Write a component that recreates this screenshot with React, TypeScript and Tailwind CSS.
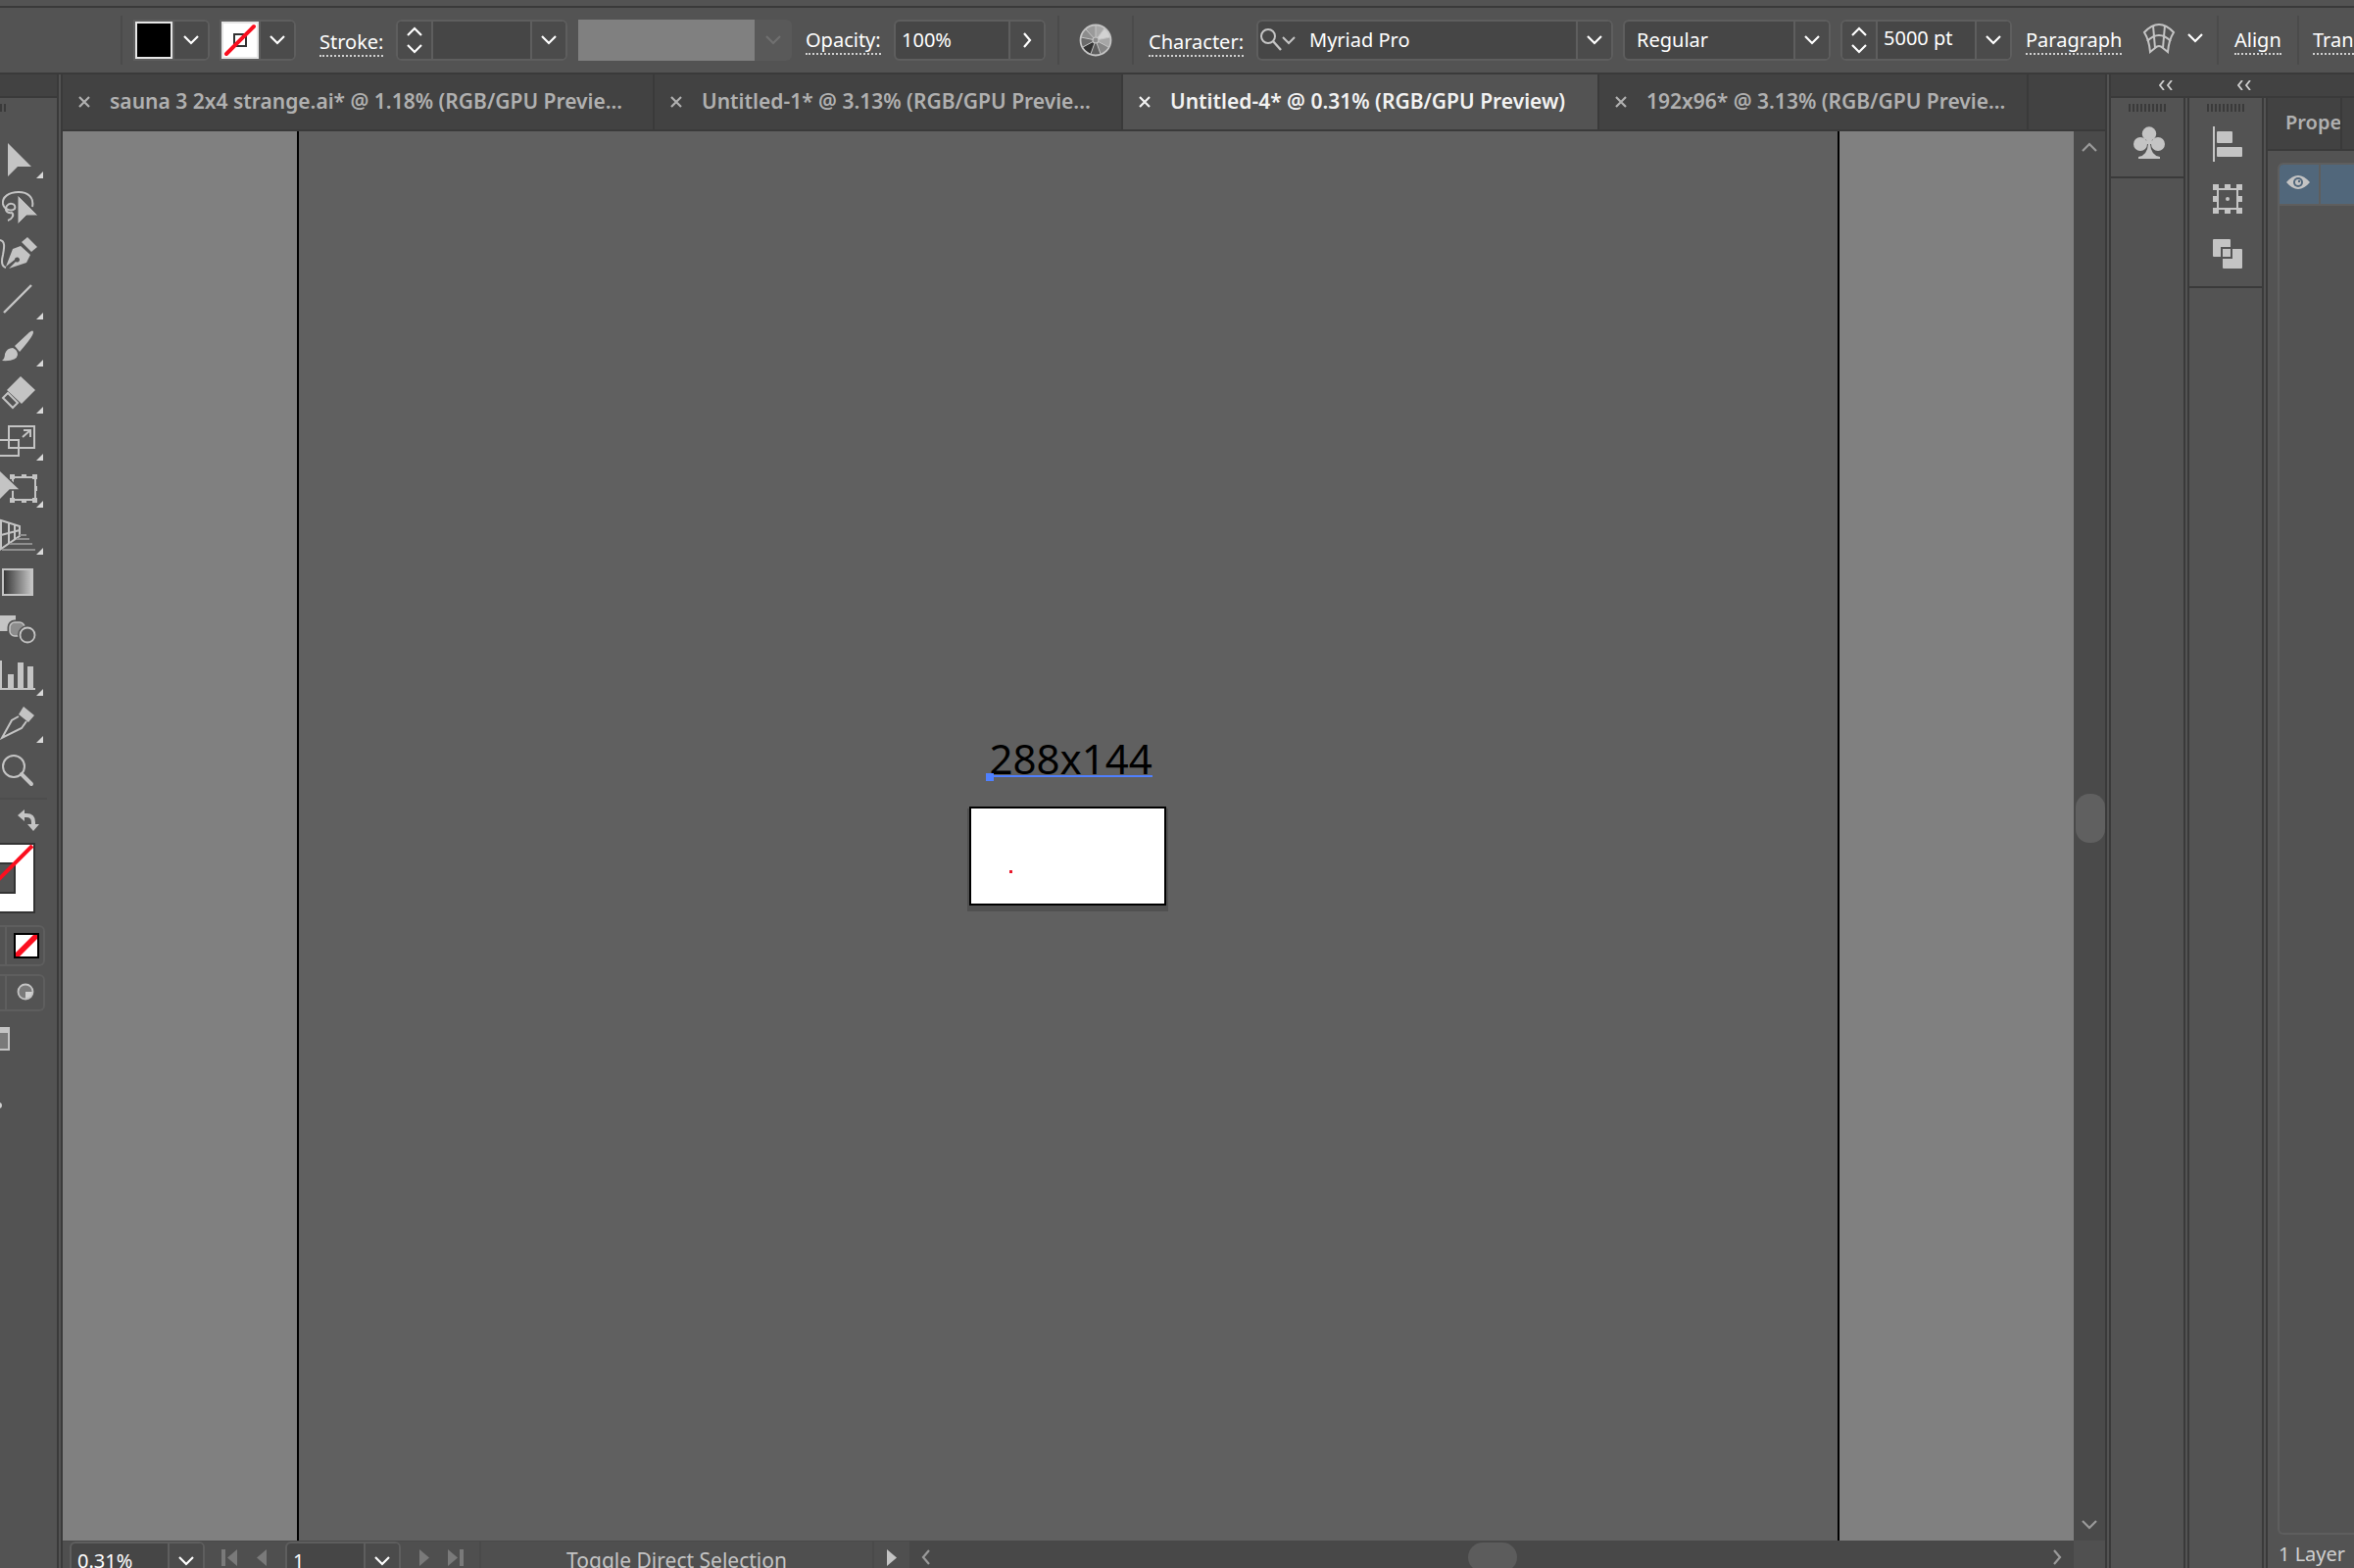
import React, { useState } from 'react';

type Dir = 'up' | 'down' | 'left' | 'right';

const chevronPaths: Record<Dir, string> = {
  down: 'M1 4 L8 11 L15 4',
  up: 'M1 12 L8 5 L15 12',
  left: 'M11 1 L5 8 L11 15',
  right: 'M5 1 L11 8 L5 15',
};

const Chevron = ({ dir = 'down', className = 'text-white' }: { dir?: Dir; className?: string }) => (
  <svg width="16" height="16" viewBox="0 0 16 16" fill="none" className={className}>
    <path d={chevronPaths[dir]} stroke="currentColor" strokeWidth="2.2" />
  </svg>
);

const Separator = () => <div className="w-[2px] h-[50px] bg-[#4b4b4b] shrink-0" />;

const boxClass =
  'flex h-[42px] shrink-0 overflow-hidden rounded-md border-2 border-[#5e5e5e] bg-[#464646]';
const arrowClass = 'flex items-center justify-center bg-[#4b4b4b] border-l-2 border-[#5e5e5e] shrink-0';
const inputClass = 'min-w-0 flex-1 bg-transparent text-white outline-none';
const underlineClass = 'border-b-2 border-dotted border-[#d0d0d0] leading-6';

const Stepper = () => (
  <div className="flex w-[34px] shrink-0 flex-col items-center justify-between bg-[#4b4b4b] py-[2px]">
    <button type="button" aria-label="Increase" className="h-4">
      <Chevron dir="up" />
    </button>
    <button type="button" aria-label="Decrease" className="h-4">
      <Chevron dir="down" />
    </button>
  </div>
);

const ControlBar = () => {
  const [strokeWeight, setStrokeWeight] = useState('');
  const [opacity, setOpacity] = useState('100%');
  const [font, setFont] = useState('Myriad Pro');
  const [style, setStyle] = useState('Regular');
  const [size, setSize] = useState('5000 pt');

  return (
    <header className="flex h-[70px] shrink-0 items-center overflow-hidden whitespace-nowrap border-y-2 border-[#3a3a3a] bg-[#535353] text-white">
      <div className="w-[123px] shrink-0" />
      <Separator />

      {/* Fill and stroke swatches */}
      <button type="button" aria-label="Fill" className={`${boxClass} ml-[11px] w-[78px] rounded-l-none`}>
        <span className="h-full w-[38px] shrink-0 border-2 border-[#e6e6e6] bg-black" />
        <span className={`${arrowClass} h-full flex-1`}>
          <Chevron />
        </span>
      </button>
      <button type="button" aria-label="Stroke colour" className={`${boxClass} ml-[10px] w-[78px] rounded-l-none`}>
        <svg width="38" height="38" viewBox="0 0 38 38" className="shrink-0">
          <rect width="38" height="38" fill="#e6e6e6" />
          <rect x="2" y="2" width="34" height="34" fill="#fff" />
          <rect x="13" y="13" width="12" height="12" fill="none" stroke="#333" strokeWidth="2" />
          <path d="M5 33 L33 5" stroke="#fb0f1f" strokeWidth="4" strokeLinecap="round" />
        </svg>
        <span className={`${arrowClass} h-full flex-1`}>
          <Chevron />
        </span>
      </button>

      <label htmlFor="stroke-weight" className="ml-6 w-[78px] shrink-0 pt-1">
        <span className={underlineClass}>Stroke:</span>
      </label>
      <div className={`${boxClass} w-[175px]`}>
        <Stepper />
        <input
          id="stroke-weight"
          type="text"
          value={strokeWeight}
          onChange={(e) => setStrokeWeight(e.target.value)}
          className={`${inputClass} border-l-2 border-[#5e5e5e]`}
        />
        <button type="button" aria-label="Stroke presets" className={`${arrowClass} w-[36px]`}>
          <Chevron />
        </button>
      </div>

      <button type="button" aria-label="Variable width profile" disabled className="ml-[11px] flex h-[42px] w-[218px] shrink-0">
        <span className="h-full w-[180px] bg-[#808080]" />
        <span className="flex h-full flex-1 items-center justify-center rounded-r-md bg-[#595959]">
          <Chevron className="text-[#707070]" />
        </span>
      </button>

      <label htmlFor="opacity" className="ml-[14px] w-[90px] shrink-0">
        <span className={underlineClass}>Opacity:</span>
      </label>
      <div className={`${boxClass} w-[155px]`}>
        <input
          id="opacity"
          type="text"
          value={opacity}
          onChange={(e) => setOpacity(e.target.value)}
          className={`${inputClass} pl-[6px]`}
        />
        <button type="button" aria-label="Opacity slider" className={`${arrowClass} w-[36px]`}>
          <Chevron dir="right" />
        </button>
      </div>

      <div className="w-3 shrink-0" />
      <Separator />
      <button type="button" aria-label="Recolor artwork" className="mx-[20px] shrink-0">
        <svg width="34" height="34" viewBox="0 0 34 34">
          <circle cx="17" cy="17" r="15.5" fill="#8c8c8c" />
          <path d="M17 17 L7 6 A15 15 0 0 1 17 2 Z" fill="#9a9a9a" />
          <path d="M17 17 L17 2 A15 15 0 0 1 26 5 Z" fill="#a8a8a8" />
          <path d="M17 17 L26 5 A15 15 0 0 1 32 14 Z" fill="#d2d2d2" />
          <path d="M17 17 L32 14 A15 15 0 0 1 30 24 Z" fill="#a6a6a6" />
          <path d="M17 17 L30 24 A15 15 0 0 1 22 31 Z" fill="#858585" />
          <path d="M17 17 L22 31 A15 15 0 0 1 12 31 Z" fill="#5e5e5e" />
          <path d="M17 17 L12 31 A15 15 0 0 1 4 24 Z" fill="#333" />
          <path d="M17 17 L4 24 A15 15 0 0 1 2 14 Z" fill="#6a6a6a" />
          <path
            d="M17 17 L7 6 M17 17 V2 M17 17 L26 5 M17 17 L32 14 M17 17 L30 24 M17 17 L22 31 M17 17 L12 31 M17 17 L4 24 M17 17 L2 14"
            stroke="#c4c4c4"
            strokeWidth="1"
          />
          <circle cx="17" cy="17" r="15.5" fill="none" stroke="#c4c4c4" strokeWidth="1.8" />
          <circle cx="17" cy="17" r="3" fill="#8c8c8c" stroke="#c4c4c4" strokeWidth="1.2" />
        </svg>
      </button>
      <Separator />

      <label htmlFor="font" className="ml-[15px] w-[110px] shrink-0 pt-1">
        <span className={underlineClass}>Character:</span>
      </label>
      <div className={`${boxClass} w-[364px]`}>
        <svg width="40" height="38" viewBox="0 0 40 38" fill="none" stroke="#c4c4c4" className="shrink-0">
          <circle cx="10" cy="15" r="7" strokeWidth="2" />
          <path d="M15 20 L23 29" strokeWidth="2.4" />
          <path d="M25 16 L31 22 L37 16" strokeWidth="2" />
        </svg>
        <input
          id="font"
          type="text"
          value={font}
          onChange={(e) => setFont(e.target.value)}
          className={`${inputClass} pl-[12px]`}
        />
        <button type="button" aria-label="Font list" className={`${arrowClass} w-[36px]`}>
          <Chevron />
        </button>
      </div>

      <div className={`${boxClass} ml-[10px] w-[212px]`}>
        <select
          aria-label="Font style"
          value={style}
          onChange={(e) => setStyle(e.target.value)}
          className="min-w-0 flex-1 appearance-none bg-transparent pl-3 text-white outline-none"
        >
          <option>Regular</option>
          <option>Bold</option>
          <option>Italic</option>
        </select>
        <span className={`${arrowClass} w-[36px] pointer-events-none`}>
          <Chevron />
        </span>
      </div>

      <div className={`${boxClass} ml-[10px] w-[175px]`}>
        <Stepper />
        <input
          aria-label="Font size"
          type="text"
          value={size}
          onChange={(e) => setSize(e.target.value)}
          className={`${inputClass} border-l-2 border-[#5e5e5e] pl-[6px] pb-1`}
        />
        <button type="button" aria-label="Font size presets" className={`${arrowClass} w-[36px]`}>
          <Chevron />
        </button>
      </div>

      <button type="button" className="ml-[14px] w-[119px] shrink-0 text-left">
        <span className={underlineClass}>Paragraph</span>
      </button>
      <button type="button" aria-label="Envelope distort" className="mr-[14px] flex w-[62px] shrink-0 items-center justify-between pb-1">
        <svg width="34" height="34" viewBox="0 0 34 34" fill="none" stroke="#c4c4c4" strokeWidth="2">
          <path d="M2 11 Q17 -5 32 11 Q27 19 26 31 L21 27 Q17 23 13 27 L8 31 Q7 19 2 11 Z" />
          <path d="M11 4 Q12 15 13 27 M23 4 Q22 15 21 27 M5 20 Q17 8 29 20" />
        </svg>
        <Chevron />
      </button>
      <Separator />
      <button type="button" className="ml-4 w-[64px] shrink-0 text-left">
        <span className={underlineClass}>Align</span>
      </button>
      <Separator />
      <button type="button" className="ml-[14px] shrink-0 text-left">
        <span className={underlineClass}>Tran</span>
      </button>
    </header>
  );
};

interface Tool {
  name: string;
  flyout?: boolean;
  art: React.ReactNode;
}

const tools: Tool[] = [
  {
    name: 'Selection',
    flyout: true,
    art: <path d="M8 7 L32 31 H18 L8 41 Z" fill="#c4c4c4" />,
  },
  {
    name: 'Lasso',
    art: (
      <>
        <path
          d="M33 24 C35 14 28 9 19 9 C9 9 2 14 3 21 C4 27 12 29 15 26 C17 21 10 19 7 23 C4 28 8 31 12 30 C15 32 12 37 8 38"
          fill="none"
          stroke="#c4c4c4"
          strokeWidth="2"
        />
        <path d="M18 12 L39 33 H27 L18 42 Z" fill="#c4c4c4" stroke="#535353" strokeWidth="1" />
      </>
    ),
  },
  {
    name: 'Pen',
    art: (
      <>
        <path d="M0 10 C6 11 4 19 3 25 C1 33 2 37 6 38" fill="none" stroke="#c4c4c4" strokeWidth="2" />
        <path d="M6 37 L13 19 L21 16 L31 25 L27 33 L9 39 L16 32 A2.500 2.500 0 1 0 15 30 Z" fill="#c4c4c4" />
        <path d="M22 12 L28 7 L38 17 L32 22 Z" fill="#c4c4c4" />
      </>
    ),
  },
  {
    name: 'Line segment',
    flyout: true,
    art: <path d="M4 36 L32 8" stroke="#c4c4c4" strokeWidth="2.4" />,
  },
  {
    name: 'Paintbrush',
    flyout: true,
    art: (
      <>
        <path d="M15 22 L30 8 Q34 5 34 8 Q34 12 20 28 Z" fill="#c4c4c4" />
        <path d="M13 24 Q18 26 18 31 Q17 38 2 37 Q5 35 5 30 Q7 24 13 24 Z" fill="#c4c4c4" />
      </>
    ),
  },
  {
    name: 'Eraser',
    flyout: true,
    art: (
      <>
        <path d="M21 5 L36 19 L22 33 L7 19 Z" fill="#c4c4c4" />
        <path d="M8 22 L3 27 L13 37 L18 32 Z" fill="none" stroke="#c4c4c4" strokeWidth="2" />
      </>
    ),
  },
  {
    name: 'Scale',
    flyout: true,
    art: (
      <g fill="none" stroke="#c4c4c4" strokeWidth="2">
        <rect x="9" y="8" width="26" height="22" />
        <rect x="-3" y="22" width="22" height="16" />
        <path d="M23 19 L31 12 M24 12 H31 V19" />
      </g>
    ),
  },
  {
    name: 'Free transform',
    flyout: true,
    art: (
      <>
        <rect x="13" y="12" width="23" height="23" fill="none" stroke="#c4c4c4" strokeWidth="2" />
        <path
          d="M10 9h5v5h-5z M22 9h5v4h-5z M33 9h5v5h-5z M35 21h3v5h-3z M10 33h5v5h-5z M22 34h5v4h-5z M33 33h5v5h-5z"
          fill="#c4c4c4"
        />
        <path d="M-1 4 L21 25 H10 L-1 36 Z" fill="#c4c4c4" stroke="#535353" strokeWidth="1.500" />
      </>
    ),
  },
  {
    name: 'Perspective grid',
    flyout: true,
    art: (
      <>
        <path
          d="M1 8 L20 14 V24 L1 37 Z M1 23 L20 18 M9 11 V31 M15 13 V27"
          fill="none"
          stroke="#c4c4c4"
          strokeWidth="2"
        />
        <path d="M20 23 H27 M17 27 H30 M10 32 H33 M2 38 H36" stroke="#8e8e8e" strokeWidth="2" />
      </>
    ),
  },
  {
    name: 'Gradient',
    art: (
      <>
        <defs>
          <linearGradient id="toolGradient">
            <stop offset="0" stopColor="#333" />
            <stop offset="1" stopColor="#c8c8c8" />
          </linearGradient>
        </defs>
        <rect x="3" y="10" width="30" height="26" fill="url(#toolGradient)" stroke="#c4c4c4" strokeWidth="2" />
      </>
    ),
  },
  {
    name: 'Blend',
    art: (
      <>
        <rect x="-2" y="9" width="18" height="16" fill="#c4c4c4" />
        <rect x="10" y="16" width="15" height="14" rx="5" fill="#8c8c8c" stroke="#535353" strokeWidth="5" />
        <rect x="10" y="16" width="15" height="14" rx="5" fill="#8c8c8c" stroke="#c4c4c4" strokeWidth="1.500" />
        <circle cx="28" cy="29" r="7.500" fill="#535353" stroke="#535353" strokeWidth="5" />
        <circle cx="28" cy="29" r="7.500" fill="#535353" stroke="#c4c4c4" strokeWidth="1.800" />
      </>
    ),
  },
  {
    name: 'Column graph',
    flyout: true,
    art: <path d="M0 7h2v28h34v2H0z M8 21h6v14H8z M18 9h6v26h-6z M28 13h6v22h-6z" fill="#c4c4c4" />,
  },
  {
    name: 'Eyedropper',
    flyout: true,
    art: (
      <>
        <path d="M24 6 L35 15 L29 22 L19 14 Z" fill="#c4c4c4" />
        <path d="M19 16 L12 20 L2 38 L22 28 L27 21" fill="none" stroke="#c4c4c4" strokeWidth="2" />
      </>
    ),
  },
  {
    name: 'Zoom',
    art: (
      <g fill="none" stroke="#c4c4c4">
        <circle cx="14" cy="19" r="11" strokeWidth="2" />
        <path d="M22 27 L32 37" strokeWidth="4" strokeLinecap="round" />
      </g>
    ),
  },
];

const Toolbar = () => (
  <aside className="flex w-[60px] shrink-0 flex-col overflow-hidden border-r-2 border-[#3a3a3a] bg-[#535353]">
    <div className="h-6 shrink-0 border-b-2 border-[#3a3a3a] bg-[#424242]" />
    <div className="flex h-[39px] shrink-0 items-start gap-[2px] pt-[6px]">
      <span className="h-2 w-[2px] bg-[#3a3a3a]" />
      <span className="h-2 w-[2px] bg-[#3a3a3a]" />
    </div>
    {tools.map((tool) => (
      <button key={tool.name} type="button" aria-label={tool.name} className="h-12 w-[58px] shrink-0">
        <svg width="58" height="48" viewBox="0 0 58 48">
          {tool.art}
          {tool.flyout && <path d="M44 36 V43 H37 Z" fill="#d8d8d8" />}
        </svg>
      </button>
    ))}
    <div className="mt-[3px] h-[2px] w-12 shrink-0 bg-[#4d4d4d]" />

    {/* Fill / stroke indicator */}
    <button type="button" aria-label="Swap fill and stroke" className="mt-2 h-9 w-[58px] shrink-0">
      <svg width="58" height="36" viewBox="0 0 58 36">
        <path d="M24 8 H27 Q34 8 34 15 V18" fill="none" stroke="#c4c4c4" strokeWidth="4" />
        <path d="M18 8 L25 2 V14 Z M28 17 H40 L34 24 Z" fill="#c4c4c4" />
      </svg>
    </button>
    <button type="button" aria-label="Stroke: none" className="h-[72px] w-[58px] shrink-0">
      <svg width="58" height="72" viewBox="0 0 58 72">
        <rect x="-30" y="1" width="65" height="70" fill="#fff" stroke="#333" strokeWidth="2" />
        <rect x="-30" y="21" width="45" height="30" fill="#535353" stroke="#333" strokeWidth="2" />
        <path d="M-2 38 L33 3" stroke="#fb0f1f" strokeWidth="4" />
      </svg>
    </button>
    <div className="mt-3 flex h-[42px] w-[46px] shrink-0 rounded-r-md border-2 border-l-0 border-[#5e5e5e]">
      <span className="w-[7px] border-r-2 border-[#5e5e5e]" />
      <button type="button" aria-label="None" className="flex flex-1 items-center justify-center pl-[2px]">
        <svg width="26" height="26" viewBox="0 0 26 26">
          <rect x="1" y="1" width="24" height="24" fill="#fff" stroke="#000" strokeWidth="2" />
          <path d="M2 20 L20 2 H24 V6 L6 24 H2 Z" fill="#fb0f1f" />
        </svg>
      </button>
    </div>
    <div className="mt-2 flex h-[38px] w-[46px] shrink-0 rounded-r-md border-2 border-l-0 border-[#5e5e5e]">
      <span className="w-[7px] border-r-2 border-[#5e5e5e]" />
      <button type="button" aria-label="Draw inside" className="flex flex-1 items-center justify-center pb-[2px]">
        <svg width="18" height="18" viewBox="0 0 18 18">
          <circle cx="9" cy="9" r="7.500" fill="#7a7a7a" stroke="#c4c4c4" strokeWidth="1.800" />
          <path d="M9 9 H16 A8 8 0 0 1 9 16 Z" fill="#d0d0d0" />
        </svg>
      </button>
    </div>
    <button type="button" aria-label="Screen mode" className="mt-4 h-6 w-[58px] shrink-0">
      <svg width="58" height="24" viewBox="0 0 58 24">
        <rect x="-10" y="1" width="19" height="22" fill="#7a7a7a" stroke="#c4c4c4" strokeWidth="2" />
        <rect x="-10" y="0" width="20" height="6" fill="#c4c4c4" />
      </svg>
    </button>
    <button type="button" aria-label="Edit toolbar" className="mt-[52px] h-2 w-[58px] shrink-0">
      <svg width="58" height="8" viewBox="0 0 58 8">
        <circle cx="-1" cy="4" r="3" fill="#d0d0d0" />
      </svg>
    </button>
  </aside>
);

const documents = [
  { title: 'sauna 3 2x4 strange.ai* @ 1.18% (RGB/GPU Previe...', width: 'w-[604px]' },
  { title: 'Untitled-1* @ 3.13% (RGB/GPU Previe...', width: 'w-[478px]' },
  { title: 'Untitled-4* @ 0.31% (RGB/GPU Preview)', width: 'w-[486px]' },
  { title: '192x96* @ 3.13% (RGB/GPU Previe...', width: 'w-[438px]' },
];

const DocumentTabs = () => {
  const [active, setActive] = useState(2);

  return (
    <nav className="flex h-[58px] shrink-0 overflow-hidden whitespace-nowrap border-b-2 border-[#3a3a3a] bg-[#424242] text-[21px]">
      {documents.map((doc, i) => (
        <div
          key={doc.title}
          className={`flex shrink-0 items-center border-r-2 border-[#3a3a3a] pl-4 ${doc.width} ${
            i === active ? 'bg-[#535353] text-[#f2f2f2]' : 'text-[#b0b0b0]'
          }`}
        >
          <button type="button" aria-label={`Close ${doc.title}`} className="mr-5 shrink-0">
            <svg width="12" height="12" viewBox="0 0 12 12">
              <path d="M1 1 L11 11 M11 1 L1 11" stroke="currentColor" strokeWidth="2.2" />
            </svg>
          </button>
          <button type="button" onClick={() => setActive(i)} className="font-semibold">
            {doc.title}
          </button>
        </div>
      ))}
    </nav>
  );
};

const Canvas = () => (
  <main className="flex min-h-0 flex-1">
    <div className="w-[239px] shrink-0 bg-[#808080]" />
    <div className="flex min-w-0 flex-1 items-center justify-center border-x-2 border-black bg-[#606060] pt-10 pr-[2px]">
      <div className="relative h-[101px] w-[201px] border-2 border-black bg-white shadow-[0_4px_0_2px_#505050]">
        <span className="absolute left-[39px] top-[63px] size-[3px] bg-[#e8192c]" />
        <div className="absolute bottom-[129px] left-[19px] h-[42px] border-b-2 border-[#4f80ff]">
          <p className="text-[42px] leading-[46px] text-black">288x144</p>
          <span className="absolute -bottom-[6px] -left-1 size-2 bg-[#4f80ff]" />
        </div>
      </div>
    </div>
    <div className="w-[239px] shrink-0 bg-[#808080]" />
    <div className="relative flex w-8 shrink-0 flex-col items-center justify-between bg-[#4a4a4a] py-2">
      <button type="button" aria-label="Scroll up">
        <Chevron dir="up" className="text-[#9a9a9a]" />
      </button>
      <span className="absolute right-0 top-[47%] h-[50px] w-[30px] rounded-[14px] bg-[#606060]" />
      <button type="button" aria-label="Scroll down">
        <Chevron dir="down" className="text-[#9a9a9a]" />
      </button>
    </div>
  </main>
);

const StatusBar = () => {
  const [zoom, setZoom] = useState('0.31%');
  const [artboard, setArtboard] = useState('1');

  return (
    <footer className="flex h-7 shrink-0 items-start overflow-hidden whitespace-nowrap bg-[#4f4f4f]">
      <div className="flex w-[864px] shrink-0 items-start border-t border-[#4a4a4a] pl-[7px]">
        <div className={`${boxClass} w-[138px]`}>
          <input
            aria-label="Zoom level"
            type="text"
            value={zoom}
            onChange={(e) => setZoom(e.target.value)}
            className={`${inputClass} pb-[2px] pl-[6px]`}
          />
          <button type="button" aria-label="Zoom presets" className={`${arrowClass} w-[36px] pb-[2px]`}>
            <Chevron />
          </button>
        </div>
        <div className="flex w-[82px] shrink-0 gap-[19px] pl-[17px] pt-2 text-[#7a7a7a]">
          <button type="button" aria-label="First artboard">
            <svg width="17" height="17" viewBox="0 0 17 17" fill="currentColor">
              <path d="M0 0h4v17H0z M16 0 V17 L6 8.500 Z" />
            </svg>
          </button>
          <button type="button" aria-label="Previous artboard">
            <svg width="10" height="17" viewBox="0 0 10 17" fill="currentColor">
              <path d="M10 0 V17 L0 8.500 Z" />
            </svg>
          </button>
        </div>
        <div className={`${boxClass} w-[118px]`}>
          <input
            aria-label="Artboard"
            type="text"
            value={artboard}
            onChange={(e) => setArtboard(e.target.value)}
            className={`${inputClass} pb-[2px] pl-[6px]`}
          />
          <button type="button" aria-label="Artboard list" className={`${arrowClass} w-[36px] pb-[2px]`}>
            <Chevron />
          </button>
        </div>
        <div className="flex h-10 w-[82px] shrink-0 gap-[19px] border-r-2 border-[#4a4a4a] pl-[19px] pt-2 text-[#7a7a7a]">
          <button type="button" aria-label="Next artboard" className="h-[17px]">
            <svg width="10" height="17" viewBox="0 0 10 17" fill="currentColor">
              <path d="M0 0 V17 L10 8.500 Z" />
            </svg>
          </button>
          <button type="button" aria-label="Last artboard" className="h-[17px]">
            <svg width="17" height="17" viewBox="0 0 17 17" fill="currentColor">
              <path d="M0 0 V17 L10 8.500 Z M12 0h4v17h-4z" />
            </svg>
          </button>
        </div>
        <p className="h-10 flex-1 text-center text-[21px] leading-[38px] text-[#c4c4c4]">Toggle Direct Selection</p>
        <button
          type="button"
          aria-label="Status menu"
          className="flex h-10 w-[38px] shrink-0 items-start justify-center border-l-2 border-[#4a4a4a] pt-2"
        >
          <svg width="10" height="17" viewBox="0 0 10 17" fill="#c4c4c4">
            <path d="M0 0 V17 L10 8.500 Z" />
          </svg>
        </button>
      </div>
      <div className="relative flex h-10 flex-1 items-start justify-between bg-[#484848] px-[9px] pt-[9px]">
        <button type="button" aria-label="Scroll left">
          <Chevron dir="left" className="text-[#9a9a9a]" />
        </button>
        <span className="absolute left-[48%] top-[2px] h-[30px] w-[50px] rounded-[15px] bg-[#5c5c5c]" />
        <button type="button" aria-label="Scroll right">
          <Chevron dir="right" className="text-[#9a9a9a]" />
        </button>
      </div>
      <div className="h-10 w-8 shrink-0 bg-[#505050]" />
    </footer>
  );
};

const Grip = () => (
  <div className="flex h-2 shrink-0 gap-[2px]">
    {Array.from({ length: 10 }, (_, i) => (
      <span key={i} className="h-2 w-[2px] bg-[#3a3a3a]" />
    ))}
  </div>
);

const Collapse = () => (
  <button type="button" aria-label="Expand panels" className="flex w-[80px] shrink-0 items-center justify-end pr-[17px]">
    <svg width="14" height="10" viewBox="0 0 14 10" fill="none" stroke="#d0d0d0" strokeWidth="1.800">
      <path d="M5 0 L1 5 L5 10 M13 0 L9 5 L13 10" />
    </svg>
  </button>
);

const dockClass = 'flex shrink-0 flex-col border-r-2 border-[#3a3a3a] bg-[#535353]';
const dockGroupClass = 'flex shrink-0 flex-col items-center border-b-2 border-[#3a3a3a] pt-[6px]';

const RightDock = () => (
  <aside className="flex w-[250px] shrink-0 flex-col overflow-hidden border-l-2 border-[#3a3a3a] bg-[#535353]">
    <div className="flex h-6 shrink-0 border-b-2 border-[#3a3a3a] bg-[#424242]">
      <Collapse />
      <Collapse />
    </div>
    <div className="flex min-h-0 flex-1">
      <div className={`${dockClass} w-[76px]`}>
        <div className={`${dockGroupClass} h-[82px]`}>
          <Grip />
          <button type="button" aria-label="Symbols" className="ml-[4px] mt-[15px]">
            <svg width="32" height="34" viewBox="0 0 32 34" fill="#c4c4c4">
              <circle cx="16" cy="7.500" r="7.200" />
              <circle cx="7" cy="18" r="7" />
              <circle cx="25" cy="18" r="7" />
              <path d="M14 12 H18 L20 18 H17 Q18 30 27 31 V33 H5 V31 Q14 30 15 18 H12 Z" />
            </svg>
          </button>
        </div>
      </div>
      <div className="w-[2px] shrink-0" />
      <div className={`${dockClass} w-[78px] border-l-2`}>
        <div className={`${dockGroupClass} h-[194px]`}>
          <Grip />
          <button type="button" aria-label="Align" className="ml-[4px] mt-[15px]">
            <svg width="30" height="36" viewBox="0 0 30 36" fill="#c4c4c4">
              <path d="M0 0h2v36H0z" />
              <rect x="4" y="5" width="16" height="12" rx="1" />
              <rect x="4" y="21" width="26" height="10" rx="1" />
            </svg>
          </button>
          <button type="button" aria-label="Transform" className="ml-[4px] mt-[23px]">
            <svg width="30" height="30" viewBox="0 0 30 30" fill="#c4c4c4">
              <rect x="5" y="5" width="20" height="20" fill="none" stroke="#c4c4c4" strokeWidth="2" />
              <path d="M0 0h6v6H0z M12 0h6v5h-6z M24 0h6v6h-6z M0 12h5v6H0z M25 12h5v6h-5z M0 24h6v6H0z M12 25h6v5h-6z M24 24h6v6h-6z" />
              <circle cx="15" cy="15" r="2" />
            </svg>
          </button>
          <button type="button" aria-label="Pathfinder" className="ml-[4px] mt-[26px]">
            <svg width="30" height="30" viewBox="0 0 30 30" fill="#c4c4c4">
              <path d="M1 0 H17 Q18 0 18 1 V8 H8 V18 H1 Q0 18 0 17 V1 Q0 0 1 0 Z" />
              <path d="M20 10 H29 Q30 10 30 11 V29 Q30 30 29 30 H11 Q10 30 10 29 V20 H20 Z" />
              <path d="M10 10h8v8h-8z" />
            </svg>
          </button>
        </div>
      </div>
      <div className="w-[2px] shrink-0" />

      {/* Properties and layers */}
      <section className="flex min-w-0 flex-1 flex-col border-l-2 border-[#3a3a3a]">
        <div className="flex h-[54px] shrink-0 border-b-2 border-[#3a3a3a] bg-[#424242]">
          <button
            type="button"
            className="w-[76px] shrink-0 overflow-hidden border-r-2 border-[#3a3a3a] pl-[18px] pb-[2px] text-left font-semibold text-[#b0b0b0]"
          >
            Prope
          </button>
        </div>
        <div className="ml-[10px] mt-3 flex-1 overflow-hidden rounded-l-md border-2 border-r-0 border-[#5e5e5e]">
          <div className="flex h-[42px] border-b-2 border-[#5e5e5e] bg-[#51677b]">
            <button type="button" aria-label="Toggle visibility" className="flex w-[42px] items-center justify-center border-r-2 border-[#5e5e5e] pb-1 pr-[2px]">
              <svg width="24" height="16" viewBox="0 0 24 16">
                <path d="M0 8 Q12 -6 24 8 Q12 22 0 8 Z" fill="#c4c4c4" />
                <circle cx="12" cy="8" r="5" fill="#51677b" />
                <circle cx="12" cy="8" r="3" fill="#c4c4c4" />
                <circle cx="13" cy="7" r="1.200" fill="#51677b" />
              </svg>
            </button>
          </div>
        </div>
        <p className="h-[34px] shrink-0 whitespace-nowrap pl-[11px] pt-2 leading-6 text-[#d0d0d0]">1 Layer</p>
      </section>
    </div>
  </aside>
);

const App: React.FC = () => (
  <div className="flex h-screen flex-col overflow-hidden bg-[#535353] font-['Noto_Sans',sans-serif] text-[20px]">
    <div className="h-[6px] shrink-0" />
    <ControlBar />
    <div className="flex min-h-0 flex-1">
      <Toolbar />
      <div className="w-[2px] shrink-0" />
      <div className="flex min-w-0 flex-1 flex-col border-x-2 border-[#3a3a3a]">
        <DocumentTabs />
        <Canvas />
        <StatusBar />
      </div>
      <div className="w-[2px] shrink-0" />
      <RightDock />
    </div>
  </div>
);

export default App;
